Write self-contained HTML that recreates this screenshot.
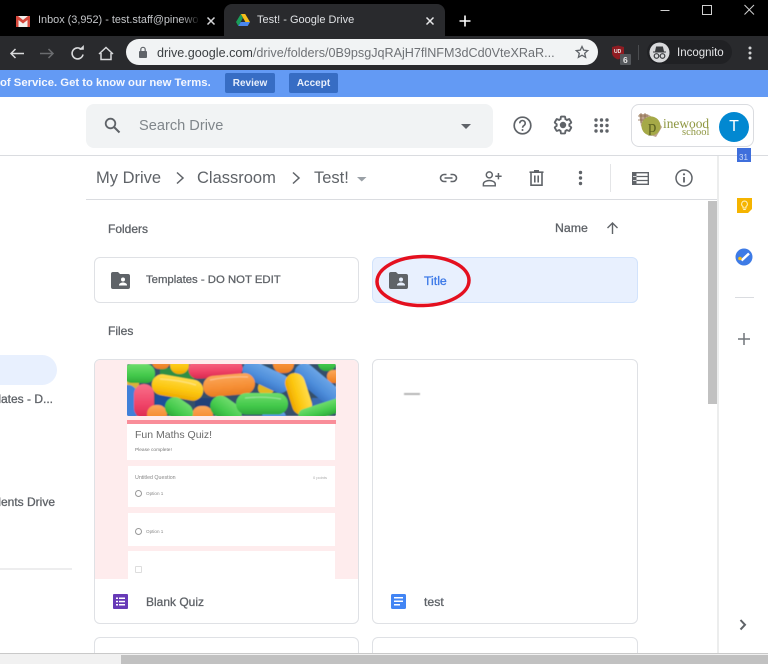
<!DOCTYPE html>
<html><head><meta charset="utf-8">
<style>
html,body{margin:0;padding:0;width:768px;height:664px;overflow:hidden}
body{position:relative;background:#fff;font-family:"Liberation Sans",sans-serif;color:#5f6368}
#w{position:absolute;left:0;top:0;width:768px;height:664px;overflow:hidden;filter:blur(.3px)}
.a{position:absolute;white-space:nowrap}
.m{-webkit-text-stroke:.3px #5f6368;font-size:12px;color:#5f6368}
svg{position:absolute;overflow:visible}
.card{position:absolute;border:1px solid #dfe1e5;border-radius:6px;box-sizing:border-box;background:#fff}
</style></head><body><div id="w">
<!-- Tab strip -->
<div class="a" style="left:0;top:0;width:768px;height:36px;background:#000"></div>
<div class="a" style="left:224px;top:4px;width:221px;height:32px;background:#292a2d;border-radius:8px 8px 0 0"></div>
<svg style="left:16px;top:16px" width="14" height="11" viewBox="0 0 14 11"><rect width="14" height="11" fill="#f2efec"/><path d="M0 0h2l5 4 5-4h2v11h-2.500V4L7 7.500 2.500 4v7H0z" fill="#d6483c"/></svg>
<div class="a" style="left:38px;top:14px;font-size:10.900px;color:#c4c6c9;width:162px;overflow:hidden">Inbox (3,952) - test.staff@pinewo</div>
<div class="a" style="left:182px;top:10px;width:18px;height:22px;background:linear-gradient(90deg,rgba(0,0,0,0),#000)"></div>
<svg style="left:206px;top:16px" width="10" height="10"><path d="M1.500 1.500l7 7m0-7l-7 7" stroke="#d5d6d8" stroke-width="1.500"/></svg>
<svg style="left:236px;top:14px" width="14" height="12" viewBox="0 0 14 12"><path d="M4.800 0h4.400l4.800 8H9.400z" fill="#f6bd19"/><path d="M4.800 0L0 8l2.300 4 4.600-8z" fill="#1b9d58"/><path d="M2.300 12h9.400L14 8H4.700z" fill="#4a86ee"/></svg>
<div class="a" style="left:257px;top:14px;font-size:11px;color:#dfe1e4">Test! - Google Drive</div>
<svg style="left:425px;top:16px" width="10" height="10"><path d="M1.500 1.500l7 7m0-7l-7 7" stroke="#e6e7e8" stroke-width="1.500"/></svg>
<svg style="left:459px;top:15px" width="12" height="12"><path d="M6 .5v11M.5 6h11" stroke="#fff" stroke-width="1.600"/></svg>
<svg style="left:660px;top:4px" width="100" height="14"><path d="M.5 6.500h9" stroke="#d0d0d0"/><rect x="42.500" y="1.500" width="9" height="9" fill="none" stroke="#d0d0d0"/><path d="M84.500 1l9.500 9.500m0-9.500l-9.500 9.500" stroke="#d0d0d0" stroke-width="1"/></svg>
<!-- Toolbar -->
<div class="a" style="left:0;top:36px;width:768px;height:34px;background:#292a2d"></div>
<svg style="left:9px;top:45px" width="120" height="18"><path d="M15 8.500H2m4.500-4.500L2 8.500 6.500 13" fill="none" stroke="#d9dadc" stroke-width="1.500"/><path d="M31 8.500h13m-4.500-4.500L44 8.500 39.500 13" fill="none" stroke="#6a6c6f" stroke-width="1.500"/><path d="M72.500 4.500a5.500 5.500 0 1 0 1.500 5" fill="none" stroke="#d9dadc" stroke-width="1.600"/><path d="M70 4.800h4.800V0z" fill="#d9dadc"/><path d="M90 9l7-6.500L104 9M92 8v6.500h10V8" fill="none" stroke="#d9dadc" stroke-width="1.500"/></svg>
<div class="a" style="left:126px;top:39px;width:472px;height:26px;background:#f1f3f4;border-radius:13px"></div>
<svg style="left:137px;top:46px" width="12" height="13"><rect x="2" y="5" width="8" height="7" rx="1" fill="#5f6368"/><path d="M3.800 5V3.500a2.200 2.200 0 0 1 4.400 0V5" fill="none" stroke="#5f6368" stroke-width="1.200"/></svg>
<div class="a" style="left:157px;top:46px;font-size:12.600px;color:#3c4043;width:405px;overflow:hidden">drive.google.com<span style="color:#6e7175">/drive/folders/0B9psgJqRAjH7flNFM3dCd0VteXRaR...</span></div>
<svg style="left:575px;top:45px" width="14" height="14" viewBox="0 0 14 14"><path d="M7 1.500l1.700 3.700 4 .4-3 2.700.9 4L7 10.200l-3.600 2.100.9-4-3-2.700 4-.4z" fill="none" stroke="#5f6368" stroke-width="1.300"/></svg>
<svg style="left:612px;top:45px" width="20" height="22"><path d="M0 2l6-1.500L12 2v6c0 3-3 5.500-6 6.500-3-1-6-3.500-6-6.500z" fill="#8f1c22"/><text x="2" y="8" font-size="5" fill="#eee" font-family="Liberation Sans" font-weight="bold">UD</text><rect x="8" y="9" width="11" height="11" rx="1" fill="#54575b"/><text x="11" y="18" font-size="8.500" font-weight="bold" fill="#e8e8e8" font-family="Liberation Sans">6</text></svg>
<div class="a" style="left:638px;top:45px;width:1px;height:15px;background:#4a4c4f"></div>
<div class="a" style="left:647px;top:40px;width:85px;height:24px;border-radius:12px;background:#202124"></div>
<svg style="left:649px;top:42px" width="22" height="22" viewBox="0 0 22 22"><circle cx="10.500" cy="10.500" r="10" fill="#d8d9db"/><path d="M4 10h13M6.500 9.500l1-4.500h6l1 4.500z" fill="#3a3c3f" stroke="#3a3c3f"/><circle cx="7.500" cy="14" r="2.300" fill="none" stroke="#3a3c3f" stroke-width="1.200"/><circle cx="13.500" cy="14" r="2.300" fill="none" stroke="#3a3c3f" stroke-width="1.200"/></svg>
<div class="a" style="left:677px;top:47px;font-size:11.500px;color:#e4e5e7">Incognito</div>
<svg style="left:748px;top:46px" width="4" height="14"><circle cx="2" cy="2" r="1.500" fill="#d3d4d6"/><circle cx="2" cy="7" r="1.500" fill="#d3d4d6"/><circle cx="2" cy="12" r="1.500" fill="#d3d4d6"/></svg>
<!-- Banner -->
<div class="a" style="left:0;top:70px;width:768px;height:27px;background:#639af4"></div>
<div class="a" style="left:0;top:77px;font-size:11.300px;font-weight:bold;color:#fff;opacity:.93">of Service. Get to know our new Terms.</div>
<div class="a" style="left:225px;top:73px;width:50px;height:20px;background:#376dc4;border-radius:2px;color:#e8effb;font-size:10px;font-weight:bold;text-align:center;line-height:21px">Review</div>
<div class="a" style="left:289px;top:73px;width:49px;height:20px;background:#376dc4;border-radius:2px;color:#e8effb;font-size:10px;font-weight:bold;text-align:center;line-height:21px">Accept</div>
<!-- Header -->
<div class="a" style="left:86px;top:104px;width:407px;height:44px;background:#f1f3f4;border-radius:8px"></div>
<svg style="left:104px;top:117px" width="17" height="17" viewBox="0 0 17 17"><circle cx="6.500" cy="6.500" r="4.800" fill="none" stroke="#5f6368" stroke-width="1.800"/><path d="M10 10l5.500 5.500" stroke="#5f6368" stroke-width="2"/></svg>
<div class="a" style="left:139px;top:118px;font-size:14.600px;color:#80868b">Search Drive</div>
<svg style="left:461px;top:124px" width="11" height="6"><path d="M0 0h10L5 5z" fill="#5f6368"/></svg>
<div class="a" style="left:0;top:155px;width:768px;height:1px;background:#dadce0"></div>
<svg style="left:512px;top:115px" width="20" height="20" viewBox="0 0 20 20"><circle cx="10.500" cy="10.500" r="8.300" fill="none" stroke="#5f6368" stroke-width="1.700"/><path d="M7.800 8.300a2.700 2.700 0 1 1 4.300 2.100c-1 .7-1.500 1.200-1.500 2.400" fill="none" stroke="#5f6368" stroke-width="1.600"/><circle cx="10.500" cy="15" r="1" fill="#5f6368"/></svg>
<svg style="left:552px;top:114px" width="22" height="22" viewBox="0 0 24 24"><path fill="#5f6368" d="M13.850 22.250h-3.700c-.74 0-1.360-.54-1.450-1.270l-.27-1.890c-.27-.14-.53-.29-.79-.46l-1.800.72c-.7.260-1.470-.03-1.810-.65L2.200 15.530c-.35-.66-.2-1.440.36-1.880l1.530-1.190c-.01-.15-.02-.3-.02-.46 0-.150.010-.310.020-.460l-1.520-1.190c-.59-.450-.74-1.260-.37-1.880l1.850-3.190c.34-.62 1.110-.9 1.790-.63l1.810.73c.26-.17.520-.32.780-.46l.27-1.910c.09-.700.710-1.250 1.440-1.250h3.700c.74 0 1.360.54 1.450 1.270l.27 1.890c.27.14.53.29.79.46l1.800-.72c.710-.260 1.480.030 1.820.650l1.840 3.180c.36.660.200 1.440-.360 1.880l-1.520 1.190c.01.150.020.300.020.460s-.01.310-.02.460l1.520 1.190c.560.450.720 1.230.370 1.860l-1.860 3.220c-.340.620-1.110.9-1.800.63l-1.800-.72c-.260.170-.520.320-.780.460l-.27 1.910c-.1.680-.720 1.220-1.450 1.220zm-3.230-2h2.760l.37-2.550.530-.220c.440-.180.880-.440 1.340-.780l.450-.340 2.380.960 1.380-2.400-2.030-1.580.070-.560c.030-.280.060-.510.060-.740s-.030-.470-.060-.740l-.070-.560 2.030-1.580-1.390-2.400-2.390.960-.450-.350c-.420-.320-.870-.580-1.330-.780l-.520-.220-.370-2.550h-2.760l-.37 2.550-.530.210c-.440.190-.880.440-1.340.790l-.450.330-2.380-.950-1.390 2.390 2.030 1.580-.070.560c-.030.260-.060.530-.060.740s.030.480.060.740l.070.560-2.030 1.580 1.380 2.400 2.390-.960.450.350c.430.330.860.580 1.330.770l.530.220zM12 15.500a3.500 3.500 0 1 1 0-7 3.500 3.500 0 0 1 0 7z"/></svg>
<svg style="left:594px;top:118px" width="15" height="15"><g fill="#5f6368"><circle cx="2" cy="2" r="1.700"/><circle cx="7.500" cy="2" r="1.700"/><circle cx="13" cy="2" r="1.700"/><circle cx="2" cy="7.500" r="1.700"/><circle cx="7.500" cy="7.500" r="1.700"/><circle cx="13" cy="7.500" r="1.700"/><circle cx="2" cy="13" r="1.700"/><circle cx="7.500" cy="13" r="1.700"/><circle cx="13" cy="13" r="1.700"/></g></svg>
<!-- Right side panel -->
<div class="a" style="left:717px;top:156px;width:2px;height:498px;background:#eceded"></div>
<svg style="left:737px;top:148px" width="14" height="14"><rect width="14" height="14" fill="#3f6fdc"/><text x="2" y="12" font-size="8" fill="#cfdcf8" font-family="Liberation Sans">31</text></svg>
<svg style="left:737px;top:198px" width="15" height="15" viewBox="0 0 15 15"><path d="M0 0h15v11l-4 4H0z" fill="#f5b400"/><path d="M7.500 3a3 3 0 0 0-1.500 5.500V10h3V8.500A3 3 0 0 0 7.500 3zM6.200 11.500h2.600" fill="none" stroke="#fff3c4" stroke-width="1"/></svg>
<svg style="left:735px;top:248px" width="18" height="18"><circle cx="9" cy="9" r="8.500" fill="#3e7be6"/><path d="M6.500 12.500L14 5.500" stroke="#fff" stroke-width="2.500"/><circle cx="5" cy="10.500" r="1.800" fill="#f6bd19"/></svg>
<div class="a" style="left:735px;top:297px;width:19px;height:1px;background:#dadce0"></div>
<svg style="left:738px;top:333px" width="12" height="12"><path d="M6 0v12M0 6h12" stroke="#70757a" stroke-width="1.500"/></svg>
<svg style="left:739px;top:619px" width="8" height="12"><path d="M1.500 1l4.500 4.800L1.500 10.500" fill="none" stroke="#5f6368" stroke-width="2"/></svg>
<!-- Account -->
<div class="a" style="left:631px;top:104px;width:123px;height:43px;background:#fff;border:1px solid #dadce0;border-radius:8px;box-sizing:border-box"></div>
<svg style="left:638px;top:113px" width="26" height="25"><path d="M1 1h8l9 5 6 8-6 10-9-3-6-8z" fill="#a8876a" opacity=".75"/><path d="M3 0v10M7 0v12M0 3h10M0 7h11" stroke="#8a6a4a" stroke-width=".8" fill="none"/><circle cx="13" cy="13" r="9.500" fill="#a5a947"/><text x="10" y="19" font-size="17" font-family="Liberation Serif" fill="#5d6322">p</text></svg>
<div class="a" style="left:663px;top:116px;font-family:'Liberation Serif',serif;font-size:13.400px;color:#8e9640">inewood</div>
<div class="a" style="left:682px;top:127px;font-family:'Liberation Serif',serif;font-size:10.500px;color:#8e9640">school</div>
<div class="a" style="left:719px;top:112px;width:30px;height:30px;border-radius:50%;background:#0288d1;color:#fff;font-size:16px;text-align:center;line-height:30px">T</div>
<!-- Breadcrumb -->
<div class="a" style="left:96px;top:169px;font-size:16.500px;color:#5f6368">My Drive</div>
<svg style="left:175px;top:171px" width="10" height="14"><path d="M2 1.500l6 5.500-6 5.500" fill="none" stroke="#5f6368" stroke-width="1.500"/></svg>
<div class="a" style="left:197px;top:169px;font-size:16.500px;color:#5f6368">Classroom</div>
<svg style="left:291px;top:171px" width="10" height="14"><path d="M2 1.500l6 5.500-6 5.500" fill="none" stroke="#5f6368" stroke-width="1.500"/></svg>
<div class="a" style="left:314px;top:169px;font-size:16.500px;color:#5f6368">Test!</div>
<svg style="left:357px;top:177px" width="10" height="5"><path d="M0 0h9.500L4.750 4.500z" fill="#9aa0a6"/></svg>
<svg style="left:438px;top:170px" width="21" height="16" viewBox="0 0 21 16"><path d="M8.500 4.500H6a3.500 3.500 0 0 0 0 7h2.500M12.500 4.500H15a3.500 3.500 0 0 1 0 7h-2.500M6.500 8h8" fill="none" stroke="#5f6368" stroke-width="1.600"/></svg>
<svg style="left:482px;top:170px" width="21" height="17" viewBox="0 0 23 18"><circle cx="8" cy="5" r="3.300" fill="none" stroke="#5f6368" stroke-width="1.600"/><path d="M1.500 17v-2c0-2.500 4-3.800 6.500-3.800s6.500 1.300 6.500 3.800v2z" fill="none" stroke="#5f6368" stroke-width="1.600"/><path d="M18 3v7M14.500 6.500h7" stroke="#5f6368" stroke-width="1.600"/></svg>
<svg style="left:529px;top:170px" width="15" height="16" viewBox="0 0 15 16"><path d="M.5 2.200h14M2 2.200V15.200h11V2.200M5 .8h5" fill="none" stroke="#5f6368" stroke-width="1.600"/><path d="M5.800 5.500v7M9.200 5.500v7" stroke="#5f6368" stroke-width="1.600"/></svg>
<svg style="left:578px;top:170px" width="5" height="16"><circle cx="2.500" cy="2.500" r="1.700" fill="#5f6368"/><circle cx="2.500" cy="8" r="1.700" fill="#5f6368"/><circle cx="2.500" cy="13.500" r="1.700" fill="#5f6368"/></svg>
<div class="a" style="left:610px;top:164px;width:1px;height:28px;background:#e4e5e7"></div>
<svg style="left:632px;top:172px" width="17" height="13" viewBox="0 0 17 13"><rect x=".7" y=".7" width="15.600" height="11.600" fill="none" stroke="#5f6368" stroke-width="1.400"/><path d="M.7 4.500h15.600M.7 8.500h15.600" stroke="#5f6368" stroke-width="1.200"/><rect x="1" y="1" width="3.500" height="11" fill="#5f6368"/><path d="M1 4.500h3.500M1 8.500h3.500" stroke="#fff" stroke-width=".7"/></svg>
<svg style="left:675px;top:169px" width="18" height="18"><circle cx="9" cy="9" r="8" fill="none" stroke="#5f6368" stroke-width="1.500"/><path d="M9 8v5.500" stroke="#5f6368" stroke-width="1.800"/><circle cx="9" cy="5.300" r="1.100" fill="#5f6368"/></svg>
<div class="a" style="left:86px;top:199px;width:631px;height:1px;background:#dadce0"></div>
<!-- Sidebar bits -->
<div class="a" style="left:-30px;top:355px;width:87px;height:30px;background:#e8f0fe;border-radius:0 15px 15px 0"></div>
<div class="a m" style="right:715px;top:392px">Templates - D...</div>
<div class="a m" style="right:713px;top:495px">Students Drive</div>
<div class="a" style="left:0;top:568px;width:72px;height:2px;background:#ededee"></div>
<!-- Content -->
<div class="a m" style="left:108px;top:222px">Folders</div>
<div class="a m" style="left:555px;top:221px;font-size:12.300px">Name</div>
<svg style="left:606px;top:221px" width="13" height="14"><path d="M6.500 13V2M1.500 7l5-5 5 5" fill="none" stroke="#5f6368" stroke-width="1.400"/></svg>
<div class="card" style="left:94px;top:257px;width:265px;height:46px"></div>
<svg style="left:111px;top:272px" width="19" height="17" viewBox="0 0 19 17"><path d="M0 2a2 2 0 0 1 2-2h5l2 2h8a2 2 0 0 1 2 2v11a2 2 0 0 1-2 2H2a2 2 0 0 1-2-2z" fill="#5f6368"/><circle cx="12" cy="7.500" r="2" fill="#fff"/><path d="M8 13c0-1.700 2.500-2.500 4-2.500s4 .8 4 2.500v.5H8z" fill="#fff"/></svg>
<div class="a m" style="left:146px;top:274px;font-size:11.350px">Templates - DO NOT EDIT</div>
<div class="card" style="left:372px;top:257px;width:266px;height:46px;background:#e8f0fe;border-color:#d2e3fc"></div>
<svg style="left:389px;top:272px" width="19" height="17" viewBox="0 0 19 17"><path d="M0 2a2 2 0 0 1 2-2h5l2 2h8a2 2 0 0 1 2 2v11a2 2 0 0 1-2 2H2a2 2 0 0 1-2-2z" fill="#5f6368"/><circle cx="12" cy="7.500" r="2" fill="#e8f0fe"/><path d="M8 13c0-1.700 2.500-2.500 4-2.500s4 .8 4 2.500v.5H8z" fill="#e8f0fe"/></svg>
<div class="a m" style="left:424px;top:274px;font-size:12.300px;color:#3b78e7;-webkit-text-stroke:.3px #3b78e7">Title</div>
<svg style="left:370px;top:250px" width="110" height="62"><ellipse cx="53" cy="31" rx="46" ry="24.500" fill="none" stroke="#e4101f" stroke-width="3.500" transform="rotate(-1 53 31)"/></svg>
<div class="a m" style="left:108px;top:324px">Files</div>
<!-- Scrollbar -->
<div class="a" style="left:708px;top:201px;width:9px;height:203px;background:#c1c1c1"></div>
<!-- File card 1 -->
<div class="card" style="left:94px;top:359px;width:265px;height:265px;overflow:hidden">
 <div class="a" style="left:0;top:0;width:265px;height:219px;background:#feeced"></div>
</div>
<svg style="left:127px;top:364px" width="209" height="52" viewBox="127 364 209 52">
 <defs><clipPath id="c"><rect x="127" y="364" width="209" height="52" rx="1.500"/></clipPath><filter id="b" x="-5%" y="-5%" width="110%" height="110%"><feGaussianBlur stdDeviation=".5"/></filter>
 <linearGradient id="gy" x1="0" y1="0" x2="0" y2="1"><stop offset="0" stop-color="#ffdc4a"/><stop offset=".6" stop-color="#fcc60f"/><stop offset="1" stop-color="#eea800"/></linearGradient>
 <linearGradient id="go" x1="0" y1="0" x2="0" y2="1"><stop offset="0" stop-color="#fba75a"/><stop offset=".6" stop-color="#f68f35"/><stop offset="1" stop-color="#e87c22"/></linearGradient>
 <linearGradient id="gg" x1="0" y1="0" x2="0" y2="1"><stop offset="0" stop-color="#6fdc6c"/><stop offset=".6" stop-color="#43c94b"/><stop offset="1" stop-color="#2ea83a"/></linearGradient>
 <linearGradient id="gb" x1="0" y1="0" x2="0" y2="1"><stop offset="0" stop-color="#6ba5e6"/><stop offset=".6" stop-color="#4e8edb"/><stop offset="1" stop-color="#3a75c4"/></linearGradient>
 <linearGradient id="gp" x1="0" y1="0" x2="0" y2="1"><stop offset="0" stop-color="#f8708a"/><stop offset=".6" stop-color="#f04468"/><stop offset="1" stop-color="#da2a50"/></linearGradient>
 </defs>
 <g clip-path="url(#c)"><g filter="url(#b)">
 <rect x="127" y="364" width="209" height="52" fill="#34506a"/>
 <rect x="155" y="395" width="22" height="14" fill="#1f4f9a"/>
 <rect x="195" y="398" width="22" height="10" fill="#203f78"/>
 <rect x="160" y="368" width="34" height="12" fill="#2f8f45"/>
 <rect x="127" y="380" width="12" height="10" fill="#d9b13a"/>
 <rect x="322" y="395" width="14" height="10" fill="#2b5da8"/>
 <rect x="312" y="398" width="12" height="9" fill="#3a6ab0"/>
 <rect x="152" y="354" width="18" height="15" rx="7" fill="url(#go)"/>
 <rect x="170" y="356" width="19" height="18" rx="9" fill="url(#gy)"/>
 <rect x="273" y="354" width="21" height="19" rx="9" fill="url(#go)"/>
 <rect x="318" y="354" width="18" height="17" rx="8" fill="url(#gg)"/>
 <rect x="327" y="370" width="14" height="13" rx="6" fill="url(#go)"/>
 <rect x="258" y="382" width="16" height="12" rx="5" fill="#e2b824"/>
 <rect x="118" y="385" width="19" height="36" rx="9" fill="#3f80d8"/>
 <rect x="262" y="411" width="24" height="12" rx="6" fill="url(#gb)"/>
 <rect x="123" y="364" width="32" height="19" rx="9" fill="url(#gg)"/>
 <rect x="188.500" y="360" width="54" height="18" rx="9" fill="url(#gp)" transform="rotate(-2 215 369)"/>
 <rect x="241" y="367.500" width="50" height="19" rx="9.500" fill="url(#gb)" transform="rotate(25 266 377)"/>
 <rect x="291" y="373" width="50" height="20" rx="10" fill="url(#gb)" transform="rotate(40 316 383)"/>
 <rect x="277" y="384" width="43" height="20" rx="10" fill="url(#gy)" transform="rotate(72 298.500 394)"/>
 <rect x="151.500" y="377" width="52" height="21" rx="10.500" fill="url(#gy)" transform="rotate(10 177.500 387.500)"/>
 <rect x="203" y="374.500" width="52" height="21" rx="10.500" fill="url(#go)" transform="rotate(-5 229 385)"/>
 <rect x="134" y="384" width="20" height="34" rx="10" fill="url(#gp)"/>
 <rect x="147" y="405" width="20" height="18" rx="9" fill="url(#go)"/>
 <rect x="192" y="406" width="21" height="18" rx="9" fill="url(#go)"/>
 <rect x="164" y="400" width="30" height="20" rx="10" fill="url(#gg)" transform="rotate(35 179 410)"/>
 <rect x="209" y="399.500" width="34" height="21" rx="10.500" fill="url(#gg)" transform="rotate(35 226 410)"/>
 <rect x="236" y="393" width="52" height="21.500" rx="10.500" fill="url(#gg)"/>
 <rect x="298" y="404" width="45" height="14" rx="6" fill="url(#gg)" transform="rotate(-18 320 411)"/>
 <path d="M160 379q20 1 36 6M210 380q20-4 38-3M245 398q20-2 36 1" fill="none" stroke="#fff" stroke-opacity=".35" stroke-width="1.200"/>
 </g></g>
</svg>
<div class="a" style="left:127px;top:420px;width:209px;height:4px;background:#f98d99"></div>
<div class="a" style="left:127px;top:424px;width:208px;height:36px;background:#fff"></div>
<div class="a" style="left:135px;top:429px;font-size:10.500px;color:#6a6a6a;filter:blur(.3px)">Fun Maths Quiz!</div>
<div class="a" style="left:135px;top:448px;font-size:4.800px;color:#777;filter:blur(.2px)">Please complete!</div>
<div class="a" style="left:128px;top:466px;width:207px;height:41px;background:#fff"></div>
<div class="a" style="left:135px;top:475px;font-size:5.300px;color:#888;filter:blur(.2px)">Untitled Question</div>
<div class="a" style="left:313px;top:475px;font-size:4px;color:#aaa;filter:blur(.2px)">0 points</div>
<div class="a" style="left:135px;top:490px;width:5px;height:5px;border:1px solid #999;border-radius:50%"></div>
<div class="a" style="left:146px;top:491px;font-size:4.600px;color:#888;filter:blur(.2px)">Option 1</div>
<div class="a" style="left:128px;top:513px;width:207px;height:33px;background:#fff"></div>
<div class="a" style="left:135px;top:528px;width:5px;height:5px;border:1px solid #999;border-radius:50%"></div>
<div class="a" style="left:146px;top:529px;font-size:4.600px;color:#888;filter:blur(.2px)">Option 1</div>
<div class="a" style="left:128px;top:551px;width:207px;height:28px;background:#fff"></div>
<div class="a" style="left:135px;top:566px;width:5px;height:5px;border:1px solid #ddd;border-radius:1px"></div>
<svg style="left:113px;top:594px" width="15" height="15" viewBox="0 0 15 15"><rect width="15" height="15" rx="1" fill="#673ab7"/><g fill="#fff"><rect x="6" y="3.500" width="6" height="1.500"/><rect x="6" y="6.800" width="6" height="1.500"/><rect x="6" y="10" width="6" height="1.500"/><rect x="3" y="3.500" width="2" height="1.500"/><rect x="3" y="6.800" width="2" height="1.500"/><rect x="3" y="10" width="2" height="1.500"/></g></svg>
<div class="a m" style="left:146px;top:595px">Blank Quiz</div>
<!-- File card 2 -->
<div class="card" style="left:372px;top:359px;width:266px;height:265px"></div>
<div class="a" style="left:404px;top:393px;width:16px;height:2px;background:#b5b5b5;filter:blur(.5px)"></div>
<svg style="left:391px;top:594px" width="15" height="15" viewBox="0 0 15 15"><rect width="15" height="15" rx="1.500" fill="#4285f4"/><g fill="#fff"><rect x="3" y="3" width="9" height="1.500"/><rect x="3" y="6.500" width="9" height="1.500"/><rect x="3" y="10" width="6" height="1.500"/></g></svg>
<div class="a m" style="left:424px;top:595px;font-size:12.300px">test</div>
<!-- Cards below -->
<div class="card" style="left:94px;top:637px;width:265px;height:24px"></div>
<div class="card" style="left:372px;top:637px;width:266px;height:24px"></div>
<!-- Bottom scrollbar -->
<div class="a" style="left:0;top:653px;width:768px;height:11px;background:#f1f1f1;border-top:1px solid #c9c9c9;box-sizing:border-box"></div>
<div class="a" style="left:121px;top:655px;width:647px;height:9px;background:#c1c1c1"></div>
</div></body></html>
